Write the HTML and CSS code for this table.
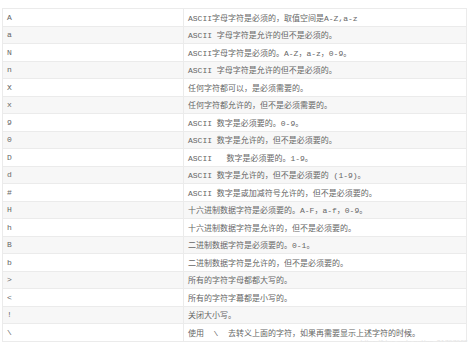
FILE: index.html
```html
<!DOCTYPE html>
<html lang="zh">

<head>
	<meta charset="UTF-8" />
	<meta name="viewport" content="width=device-width, initial-scale=1.0" />
	<title>格式字符</title>
	<link rel="stylesheet" href="styles.css">
</head>

<body>
	<div class="page">
		<table class="mask-table">
			<tr><td>A</td><td>ASCII字母字符是必须的，取值空间是A-Z,a-z</td></tr>
			<tr><td>a</td><td>ASCII 字母字符是允许的但不是必须的。</td></tr>
			<tr><td>N</td><td>ASCII字母字符是必须的。A-Z，a-z，0-9。</td></tr>
			<tr><td>n</td><td>ASCII 字母字符是允许的但不是必须的。</td></tr>
			<tr><td>X</td><td>任何字符都可以，是必须需要的。</td></tr>
			<tr><td>x</td><td>任何字符都允许的，但不是必须需要的。</td></tr>
			<tr><td>9</td><td>ASCII 数字是必须要的。0-9。</td></tr>
			<tr><td>0</td><td>ASCII 数字是允许的，但不是必须要的。</td></tr>
			<tr><td>D</td><td>ASCII&nbsp;&nbsp;&nbsp;数字是必须要的。1-9。</td></tr>
			<tr><td>d</td><td>ASCII 数字是允许的，但不是必须要的 (1-9)。</td></tr>
			<tr><td>#</td><td>ASCII 数字是或加减符号允许的，但不是必须要的。</td></tr>
			<tr><td>H</td><td>十六进制数据字符是必须要的。A-F，a-f，0-9。</td></tr>
			<tr><td>h</td><td>十六进制数据字符是允许的，但不是必须要的。</td></tr>
			<tr><td>B</td><td>二进制数据字符是必须要的。0-1。</td></tr>
			<tr><td>b</td><td>二进制数据字符是允许的，但不是必须要的。</td></tr>
			<tr><td>&gt;</td><td>所有的字符字母都都大写的。</td></tr>
			<tr><td>&lt;</td><td>所有的字符字幕都是小写的。</td></tr>
			<tr><td>!</td><td>关闭大小写。</td></tr>
			<tr><td>\</td><td>使用&nbsp;&nbsp;\&nbsp;&nbsp;去转义上面的字符，如果再需要显示上述字符的时候。</td></tr>
		</table>
		<div class="watermark">https://blog.csdn.net/qq_21797985</div>
	</div>
</body>

</html>
```

FILE: styles.css
```css
body {
	margin: 0;
	background: #fff;
}

.page {
	position: relative;
	padding: 8px 7px 0 2px;
}

.mask-table {
	border-collapse: collapse;
	width: 465px;
	table-layout: fixed;
	font-family: "Liberation Mono", "Noto Sans CJK SC", monospace;
	font-size: 8px;
	color: #666;
}

.mask-table td {
	height: 16.5px;
	padding: 0 4px;
	border: 1px solid #ebebeb;
	white-space: nowrap;
	vertical-align: middle;
}

.mask-table td:first-child {
	width: 172px;
}

.mask-table tr:nth-child(even) {
	background: #f7f7f7;
}

/* csdn watermark */
.watermark {
	position: absolute;
	right: 6px;
	top: 339px;
	font-family: "Liberation Sans", sans-serif;
	font-size: 7px;
	line-height: 8px;
	color: #e6e6e6;
}
```
